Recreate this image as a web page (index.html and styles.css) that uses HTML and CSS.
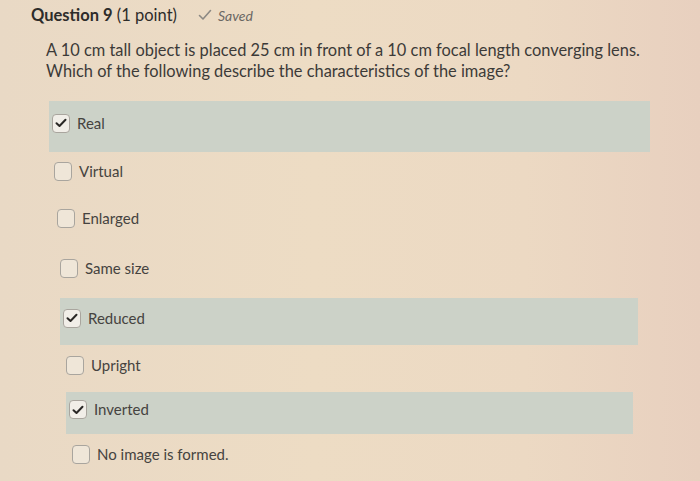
FILE: index.html
```html
<!DOCTYPE html>
<html lang="en">
<head>
<meta charset="utf-8">
<title>Question 9</title>
<link rel="stylesheet" href="styles.css">
</head>
<body>
<div class="page">
  <header class="q-head">
    <h1 class="q-title"><span class="q-num">Question 9</span> (1 point)</h1>
    <span class="saved">
      <svg class="saved-icon" viewBox="0 0 14 12" width="14" height="12" aria-hidden="true"><path d="M1.5 6.5 L5 10 L12.5 1.5" fill="none" stroke="currentColor" stroke-width="1.6" stroke-linecap="round" stroke-linejoin="round"/></svg>
      <span class="saved-text">Saved</span>
    </span>
  </header>
  <p class="q-text">A 10 cm tall object is placed 25 cm in front of a 10 cm focal length converging lens.<br>Which of the following describe the characteristics of the image?</p>
  <ul class="options">
    <li class="opt is-checked"><span class="box"><svg viewBox="0 0 12 10" width="12" height="10"><path d="M1.5 5.2 L4.5 8 L10.5 1.8" fill="none" stroke="currentColor" stroke-width="2" stroke-linecap="round" stroke-linejoin="round"/></svg></span><span class="label">Real</span></li>
    <li class="opt"><span class="box"></span><span class="label">Virtual</span></li>
    <li class="opt"><span class="box"></span><span class="label">Enlarged</span></li>
    <li class="opt"><span class="box"></span><span class="label">Same size</span></li>
    <li class="opt is-checked"><span class="box"><svg viewBox="0 0 12 10" width="12" height="10"><path d="M1.5 5.2 L4.5 8 L10.5 1.8" fill="none" stroke="currentColor" stroke-width="2" stroke-linecap="round" stroke-linejoin="round"/></svg></span><span class="label">Reduced</span></li>
    <li class="opt"><span class="box"></span><span class="label">Upright</span></li>
    <li class="opt is-checked"><span class="box"><svg viewBox="0 0 12 10" width="12" height="10"><path d="M1.5 5.2 L4.5 8 L10.5 1.8" fill="none" stroke="currentColor" stroke-width="2" stroke-linecap="round" stroke-linejoin="round"/></svg></span><span class="label">Inverted</span></li>
    <li class="opt"><span class="box"></span><span class="label">No image is formed.</span></li>
  </ul>
</div>
</body>
</html>
```

FILE: styles.css
```css
* { box-sizing: border-box; }
html, body { margin: 0; padding: 0; }
body {
  width: 700px;
  height: 481px;
  overflow: hidden;
  font-family: Lato, "Open Sans", sans-serif;
  color: #3b3937;
  background: linear-gradient(90deg, #e9d9c5 0%, #eddcc4 45%, #ecd9c3 75%, #e8d0bf 100%);
}
.page {
  padding-top: 5px;
}
.q-head {
  display: flex;
  align-items: baseline;
  gap: 21px;
  padding-left: 31px;
  height: 22px;
}
.q-title {
  margin: 0;
  font-size: 16.5px;
  font-weight: 400;
  color: #2e2c2a;
  line-height: 20px;
}
.q-num { font-weight: 700; }
.saved {
  display: inline-flex;
  align-items: center;
  gap: 6px;
  color: #6a6763;
  font-style: italic;
  font-size: 14px;
}
.saved-icon { color: #8c8984; }
.q-text {
  margin: 12px 0 0;
  padding-left: 46px;
  font-size: 16.4px;
  line-height: 21px;
  color: #3c3a38;
}
.options {
  list-style: none;
  margin: 0;
  padding: 0;
  margin-top: 20px;
}
.opt {
  display: flex;
  align-items: center;
  padding-left: 3px;
  padding-bottom: 7px;
  font-size: 15px;
  color: #454340;
}
.opt.is-checked { background: #ccd2c8; }
.box {
  width: 18px;
  height: 19px;
  flex: 0 0 auto;
  border: 1.5px solid #a9a59e;
  border-radius: 4px;
  background: #efe6d8;
  display: inline-flex;
  align-items: center;
  justify-content: center;
  color: #2a2826;
  margin-right: 7px;
}
.is-checked .box { background: #f1eee8; }
.label { line-height: 19px; }

.opt:nth-child(1) { height: 51px; margin-left: 49px; margin-right: 50px; }
.opt:nth-child(2) { height: 46px; margin-left: 51px; margin-right: 53px; }
.opt:nth-child(3) { height: 48px; margin-left: 54px; margin-right: 56px; }
.opt:nth-child(4) { height: 52px; margin-left: 57px; margin-right: 59px; }
.opt:nth-child(5) { height: 47px; margin-left: 60px; margin-right: 62px; }
.opt:nth-child(6) { height: 47px; margin-left: 63px; margin-right: 64px; }
.opt:nth-child(7) { height: 42px; margin-left: 66px; margin-right: 67px; }
.opt:nth-child(8) { height: 47px; margin-left: 69px; margin-right: 70px; }
```
